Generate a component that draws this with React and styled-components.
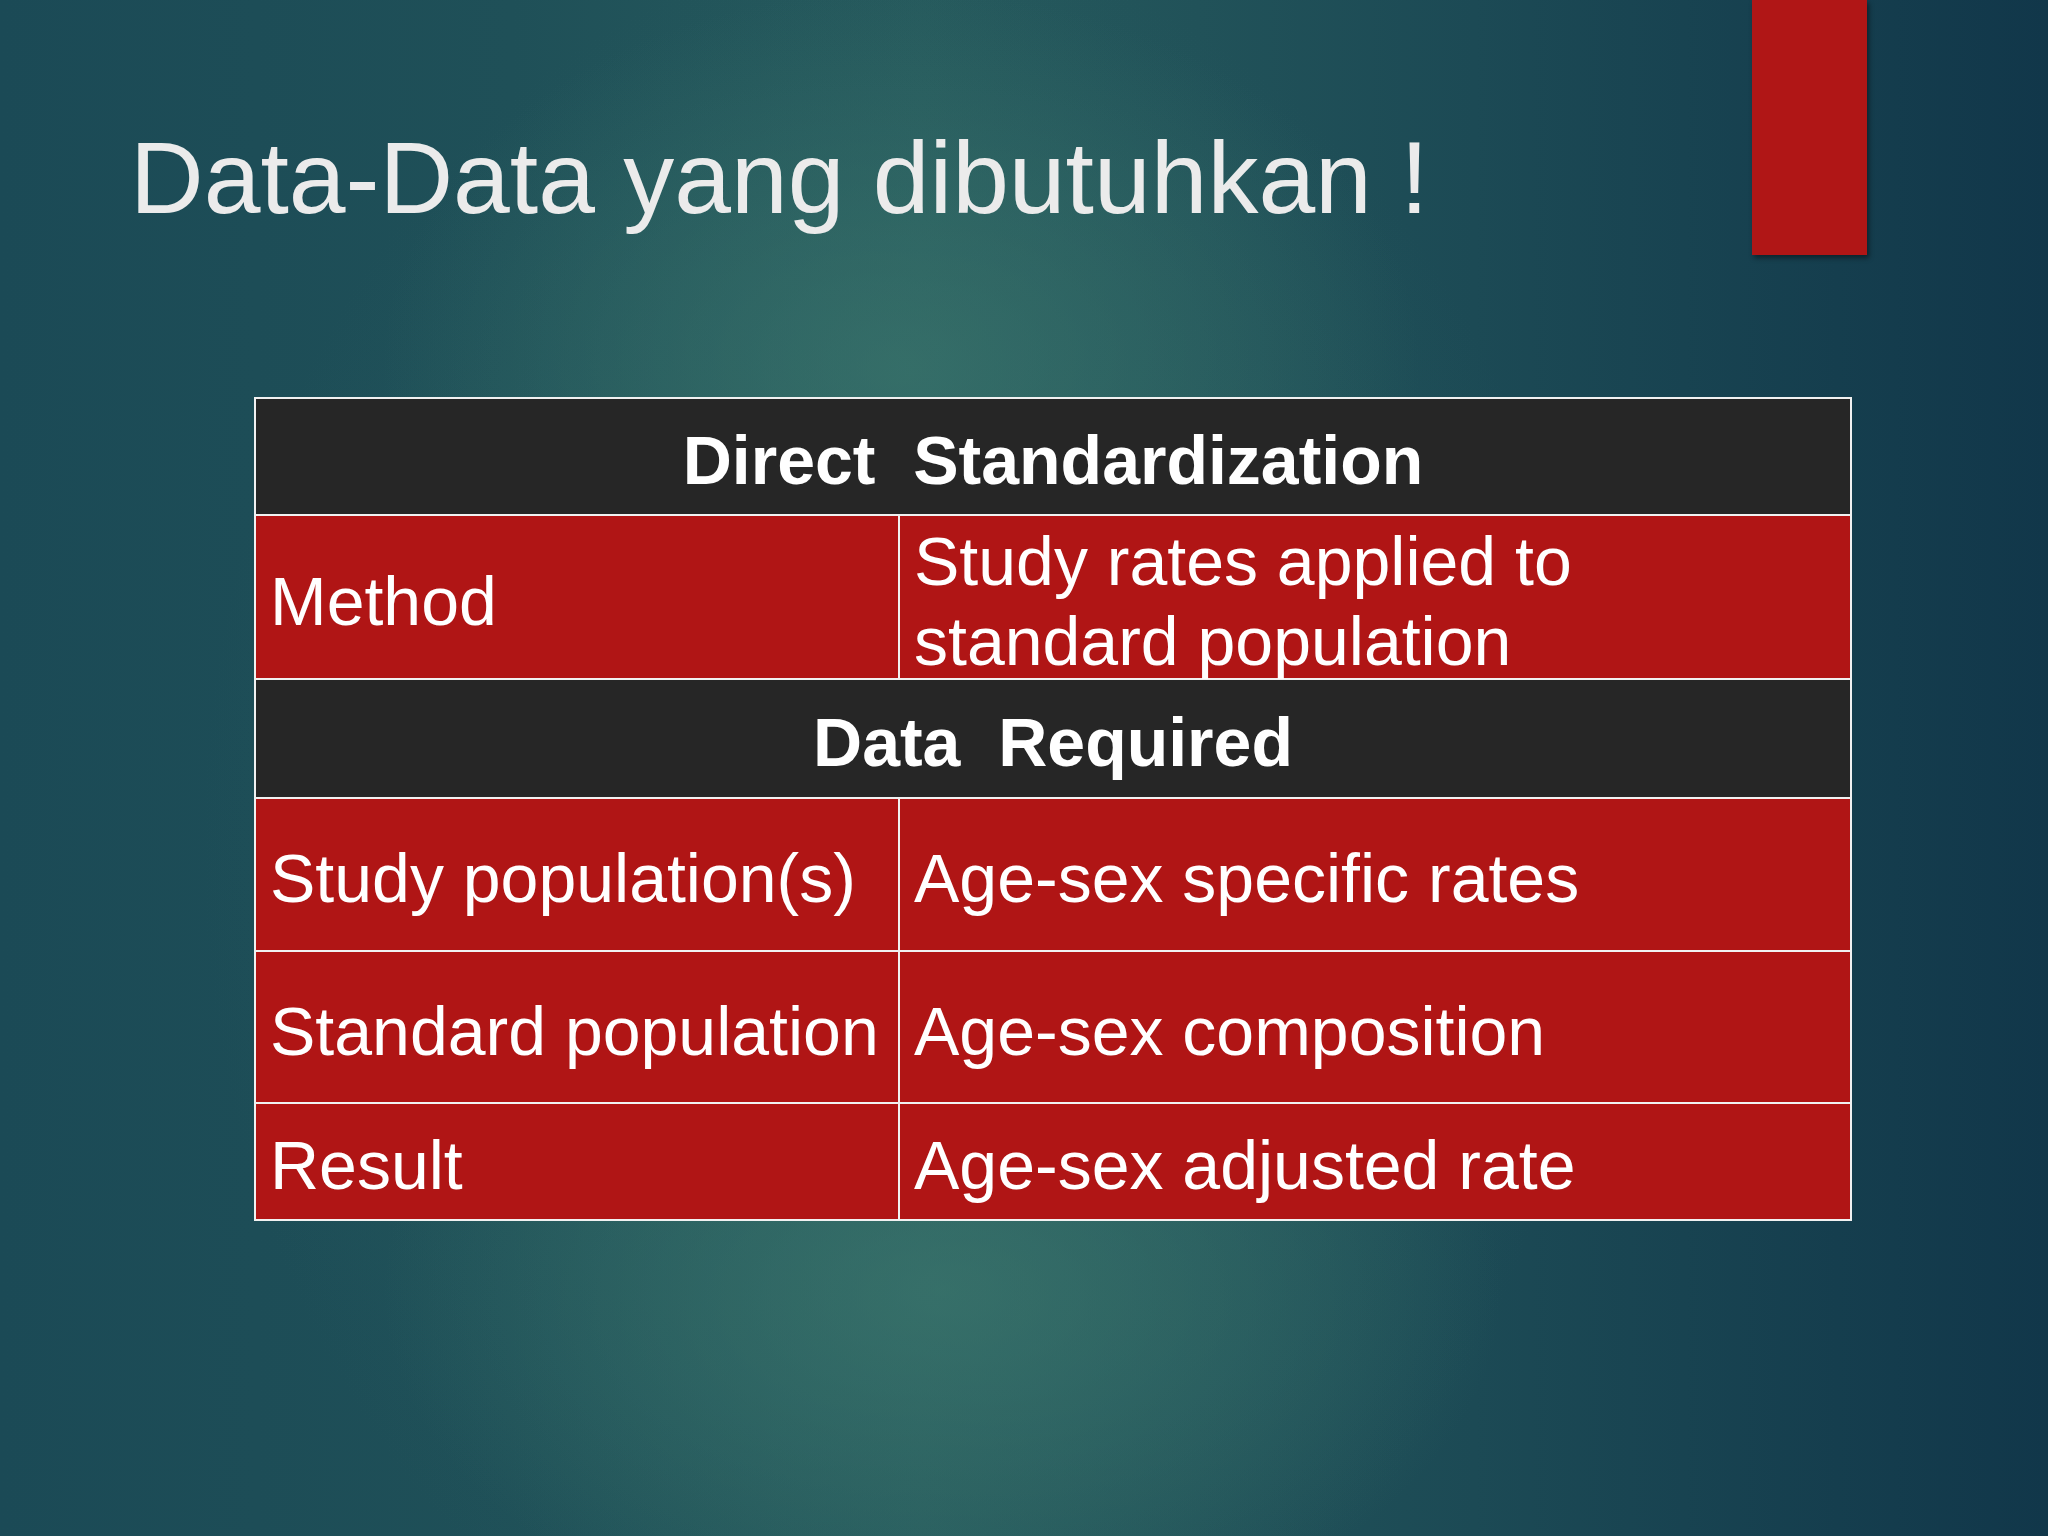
import React from 'react'
import styled, { createGlobalStyle } from 'styled-components'

const GlobalStyle = createGlobalStyle`
    html, body {
        margin: 0;
        padding: 0;
        background: #12384a;
    }
    body {
        font-family: "Liberation Sans", Arial, sans-serif;
    }
`;

const Slide = styled.div`
    position: relative;
    width: 2048px;
    height: 1536px;
    overflow: hidden;
    background:
        radial-gradient(ellipse 520px 380px at 44% 24%, rgba(64, 124, 112, 0.55), rgba(64, 124, 112, 0) 100%),
        radial-gradient(ellipse 560px 360px at 46% 84%, rgba(64, 124, 112, 0.6), rgba(64, 124, 112, 0) 100%),
        radial-gradient(ellipse 700px 900px at 44% 55%, rgba(44, 98, 98, 0.7), rgba(44, 98, 98, 0) 100%),
        linear-gradient(to right, #1b4a56 0%, #1f5058 25%, #265a5d 45%, #1c4a55 72%, #11374a 100%);
`;

const Accent = styled.div`
    position: absolute;
    left: 1752px;
    top: 0;
    width: 115px;
    height: 255px;
    background: #b01616;
    box-shadow: 2px 3px 5px rgba(0, 0, 0, 0.45);
`;

const Title = styled.h1`
    margin: 0;
    padding: 120px 0 0 130px;
    font-family: "Liberation Sans", Arial, sans-serif;
    font-weight: 400;
    font-size: 102px;
    line-height: 1.15;
    color: #ebebeb;
`;

const Table = styled.div`
    display: grid;
    grid-template-columns: 642px 950px;
    grid-template-rows: 115px 162px 117px 151px 150px 115px;
    gap: 2px;
    padding: 2px;
    width: max-content;
    margin: 160px 0 0 254px;
    background: #f1f1f1;
`;

const Cell = styled.div`
    display: flex;
    align-items: center;
    justify-content: ${p => (p.$head ? 'center' : 'flex-start')};
    grid-column: ${p => (p.$head ? '1 / span 2' : 'auto')};
    padding: 7px ${p => (p.$head ? '0' : '14px')} 0;
    background: ${p => (p.$head ? '#262626' : '#b01515')};
    color: #ffffff;
    font-family: "Liberation Sans", Arial, sans-serif;
    font-size: 68px;
    font-weight: ${p => (p.$head ? 700 : 400)};
    line-height: 1.18;
    white-space: pre;
`;

const rows = [
    { head: 'Direct  Standardization' },
    { left: 'Method', right: 'Study rates applied to\nstandard population' },
    { head: 'Data  Required' },
    { left: 'Study population(s)', right: 'Age-sex specific rates' },
    { left: 'Standard population', right: 'Age-sex composition' },
    { left: 'Result', right: 'Age-sex adjusted rate' },
];

const App = () => {
    return (
        <>
            <GlobalStyle />
            <Slide>
                <Accent />
                <Title>Data-Data yang dibutuhkan !</Title>
                <Table>
                    {rows.map((row, i) =>
                        row.head ? (
                            <Cell key={i} $head>{row.head}</Cell>
                        ) : (
                            <React.Fragment key={i}>
                                <Cell>{row.left}</Cell>
                                <Cell>{row.right}</Cell>
                            </React.Fragment>
                        )
                    )}
                </Table>
            </Slide>
        </>
    )
}

export default App
